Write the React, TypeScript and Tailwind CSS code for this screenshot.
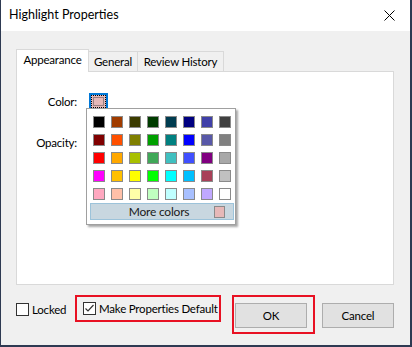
import React from "react";

const palette = [
  ["#000000", "#a03c00", "#3c3c00", "#003c00", "#003c50", "#000080", "#4040a8", "#404040"],
  ["#800000", "#ff5000", "#808000", "#00a000", "#008080", "#0000ff", "#5858a8", "#808080"],
  ["#ff0000", "#ffa800", "#a8c000", "#40a858", "#40c0c0", "#4050ff", "#800080", "#a8a8a8"],
  ["#ff00ff", "#ffc000", "#ffff00", "#00ff00", "#00ffff", "#00c0ff", "#a84058", "#c0c0c0"],
  ["#ffa8c0", "#ffc0a8", "#ffffa8", "#c0ffc0", "#c0ffff", "#a8c0ff", "#c0a8ff", "#ffffff"],
];

const font = { fontFamily: 'Lato, "Noto Sans", sans-serif' };

const CheckBox = ({ checked }: { checked?: boolean }) => (
  <div className="w-[13px] h-[13px] border border-[#333333] bg-white flex items-center justify-center shrink-0">
    {checked && (
      <svg width="11" height="11" viewBox="0 0 11 11">
        <path d="M1.5 5.5 L4 8 L9.5 2" fill="none" stroke="#333333" strokeWidth="1.2" />
      </svg>
    )}
  </div>
);

const ColorPopup = () => (
  <div className="absolute left-[69px] top-[36px] w-[150px] h-[117px] bg-white border border-[#a0a0a0] shadow-[2px_2px_2px_rgba(0,0,0,0.35)] flex flex-col">
    <div className="mt-[7px] ml-[6px] grid grid-cols-[repeat(8,12px)] gap-[6px]">
      {palette.flat().map((c, i) => (
        <div key={i} className="w-[12px] h-[12px] border border-[#8a8a8a]" style={{ backgroundColor: c }} />
      ))}
    </div>
    <div className="mt-[3px] ml-[3px] w-[144px] h-[17px] bg-[#c8d7e0] border border-[#9cc3da] flex items-center relative">
      <span className="flex-1 text-center text-[12px] text-[#1a1a1a] leading-none pr-[6px]">More colors</span>
      <div className="absolute left-[123px] top-[2px] w-[11px] h-[12px] bg-[#e6b8b8] border border-[#8a8a8a]" />
    </div>
  </div>
);

export default function App() {
  return (
    <div className="w-[412px] h-[347px] bg-[#2e3a52] overflow-hidden" style={font}>
      <div className="ml-px w-[409px] h-[345px] bg-[#f0f0f0] flex flex-col text-[11.5px] tracking-[-0.2px] text-black">
        <div className="h-[31px] bg-white flex items-center justify-between pl-[8px] pr-[15px]">
          <span className="text-[12.5px] tracking-normal">Highlight Properties</span>
          <svg width="11" height="11" viewBox="0 0 11 11">
            <path d="M0.5 0.5 L10.5 10.5 M10.5 0.5 L0.5 10.5" stroke="#000" strokeWidth="1" />
          </svg>
        </div>

        <div className="pl-[15px] pt-[17px]">
          <div className="flex items-end h-[23px]">
            <div className="w-[73px] h-[23px] bg-white border border-b-0 border-[#d9d9d9] flex items-center justify-center relative z-10 -mb-px pb-[2px]">
              Appearance
            </div>
            <div className="w-[49px] h-[20px] bg-[#f0f0f0] border border-l-0 border-b-0 border-[#d9d9d9] flex items-center justify-center">
              General
            </div>
            <div className="w-[86px] h-[20px] bg-[#f0f0f0] border border-l-0 border-b-0 border-[#d9d9d9] flex items-center justify-center">
              Review History
            </div>
          </div>
          <div className="w-[378px] h-[214px] bg-white border border-[#d9d9d9] relative">
            <div className="pt-[21px] flex flex-col">
              <div className="flex items-center h-[17px]">
                <span className="w-[60px] text-right">Color:</span>
                <div className="ml-[12px] w-[19px] h-[17px] border-2 border-[#0078d7] bg-white">
                  <div className="w-full h-full border border-dotted border-black bg-[#e6b8b8] p-px">
                    <div className="w-full h-full bg-[#e6b8b8] border border-[#9a8080]" />
                  </div>
                </div>
              </div>
              <div className="flex items-center h-[17px] mt-[24px]">
                <span className="w-[60px] text-right">Opacity:</span>
              </div>
            </div>
            <ColorPopup />
          </div>
        </div>

        <div className="flex items-start pl-[15px] mt-[10px]">
          <div className="w-[59px] mt-[8px] flex items-center gap-[3px] h-[13px]">
            <CheckBox />
            <span>Locked</span>
          </div>
          <div className="w-[146px] h-[27px] border-2 border-[#e81123] pl-[6px] flex items-center gap-[3px]">
            <CheckBox checked />
            <span className="whitespace-nowrap">Make Properties Default</span>
          </div>
          <div className="ml-[11px] w-[83px] h-[39px] border-2 border-[#e81123] pl-px pt-[6px]">
            <div className="w-[72px] h-[25px] bg-[#e1e1e1] border border-[#adadad] flex items-center justify-center">
              OK
            </div>
          </div>
          <div className="ml-[7px] mt-[8px] w-[72px] h-[25px] bg-[#e1e1e1] border border-[#adadad] flex items-center justify-center">
            Cancel
          </div>
        </div>
      </div>
    </div>
  );
}
